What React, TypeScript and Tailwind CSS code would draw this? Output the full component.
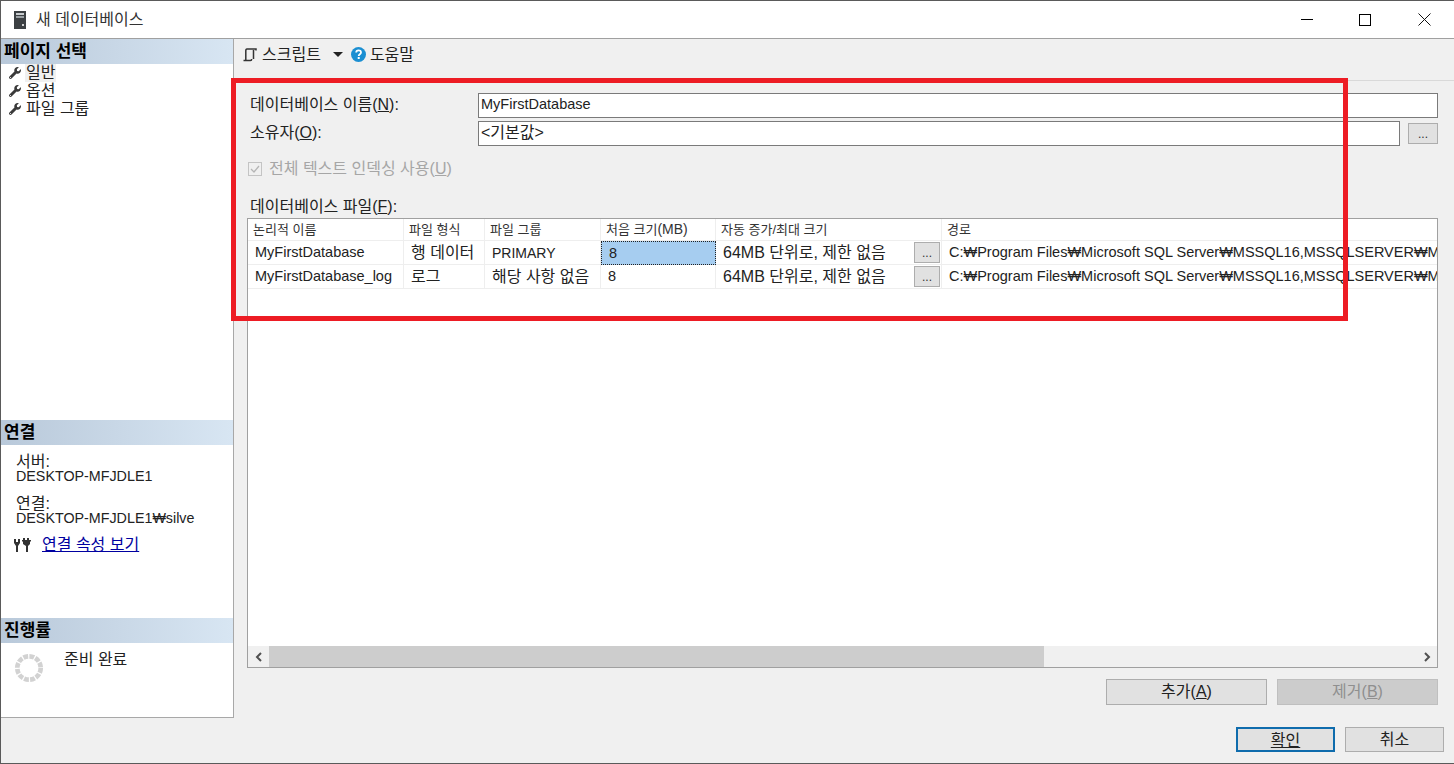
import React from 'react';
import { FaWrench } from 'react-icons/fa';

const font = "font-['Liberation_Sans','Noto_Sans_CJK_KR',sans-serif]";

const ServerIcon = () => (
  <svg width="12" height="18" viewBox="0 0 12 18">
    <rect width="12" height="18" fill="#3c4043" />
    <rect x="2" y="2" width="8" height="2" fill="#c8cccf" />
    <rect x="2" y="5" width="8" height="2" fill="#9aa0a4" />
    <rect x="8" y="13" width="2" height="2" fill="#d0d0d0" />
  </svg>
);

const ScriptIcon = () => (
  <svg width="16" height="16" viewBox="0 0 16 16" fill="none" stroke="#333" strokeWidth="1.5">
    <path d="M5 2h9v1.5M5 2c-1 0-1.2 1-1.2 2v8" />
    <path d="M1.5 13.5h7c1 0 1.2-.5 1.2-1.5M3.8 12v1.5M11.5 3v9" />
  </svg>
);

const HelpIcon = () => (
  <svg width="15" height="15" viewBox="0 0 15 15">
    <circle cx="7.5" cy="7.5" r="7.5" fill="#1b8fd2" />
    <path d="M5.2 5.6c0-3 4.8-3 4.8-.2 0 1.8-2.3 1.8-2.3 3.6" fill="none" stroke="#fff" strokeWidth="1.8" />
    <rect x="6.7" y="10" width="2" height="2" fill="#fff" />
  </svg>
);

const PlugIcon = () => (
  <svg width="18" height="14" viewBox="0 0 18 14" fill="#333">
    <path d="M0 1h2v3h2V1h2v4L4 8v6H2V8L0 5z" />
    <path d="M9 0h2v2h2V0h2v2h2v1.5h-1V6l-2 2v6h-2V8L9 6V3.5H8V2h1z" />
  </svg>
);

const Spinner = () => (
  <svg width="30" height="30" viewBox="0 0 32 32" fill="none" className="mt-[2px]">
    <circle cx="16" cy="16" r="12.5" stroke="#d2d2d2" strokeWidth="5" strokeDasharray="5.2 1.35" />
  </svg>
);

const SectionHeader = ({ children }: { children: React.ReactNode }) => (
  <div className="h-[25px] pl-[3px] pb-[1px] flex items-center bg-gradient-to-r from-[#b9c9da] to-[#d8e6f3] text-[17px] font-bold text-black leading-none">
    {children}
  </div>
);

const NavItem = ({ label, active }: { label: string; active?: boolean }) => (
  <div className="h-[18px] flex items-center pl-[8px] gap-[4px]">
    <FaWrench size={12} className="text-[#3a3a3a]" />
    <span className={active ? 'bg-[#f0f0f0] leading-[18px] px-[1px]' : 'leading-[18px] px-[1px]'}>{label}</span>
  </div>
);

const DotsButton = ({ className }: { className: string }) => (
  <button className={`bg-[#e1e1e1] border border-[#adadad] text-[12px] leading-none flex items-end justify-center pb-[3px] text-[#333] ${className}`}>
    ...
  </button>
);

const path = 'C:₩Program Files₩Microsoft SQL Server₩MSSQL16,MSSQLSERVER₩MSSQL₩DATA₩';

const cols = 'grid grid-cols-[156px_81px_116px_115px_226px_1fr]';
const cell = 'h-[24px] border-r border-b border-[#eeeeee] flex items-center overflow-hidden whitespace-nowrap';

const FileRow = ({ name, kind, group, groupClass, selected }: { name: string; kind: string; group: string; groupClass: string; selected?: boolean }) => (
  <div className={`${cols} text-[#222]`}>
    <div className={`${cell} pl-[7px] pt-[1px] text-[14.5px]`}>{name}</div>
    <div className={`${cell} pl-[7px] pt-[1px]`}>{kind}</div>
    <div className={`${cell} pl-[7px] pt-[1px] ${groupClass}`}>{group}</div>
    <div className={selected ? 'h-[24px] pl-[7px] pt-[1px] flex items-center bg-[#a6cdf0] border border-dotted border-[#222] text-[14.5px]' : `${cell} pl-[7px] pt-[1px] text-[14.5px]`}>8</div>
    <div className={`${cell} pl-[7px] justify-between pr-[1px]`}>
      <span className="whitespace-nowrap pt-[1px]">64MB 단위로, 제한 없음</span>
      <DotsButton className="w-[26px] h-[21px] shrink-0" />
    </div>
    <div className={`${cell} pl-[7px] pt-[1px] border-r-0 text-[14.5px]`}>{path}</div>
  </div>
);

const App: React.FC = () => {
  return (
    <div className={`${font} relative w-[1454px] h-[764px] overflow-hidden bg-[#f0f0f0] border-t border-l border-b border-[#5a5a5a] flex flex-col text-[16px] text-[#222]`}>
      {/* title bar */}
      <div className="h-[38px] shrink-0 bg-white border-b border-[#a0a0a0] flex items-center">
        <div className="ml-[13px] mr-[10px] flex items-center"><ServerIcon /></div>
        <span className="text-[#333]">새 데이터베이스</span>
        <div className="ml-auto flex items-center">
          <div className="w-[59px] flex justify-center"><div className="w-[12px] h-px bg-black" /></div>
          <div className="w-[58px] flex justify-center"><div className="w-[12px] h-[12px] border border-black" /></div>
          <div className="w-[60px] flex justify-center">
            <svg width="13" height="13" viewBox="0 0 13 13" stroke="#111" strokeWidth="1"><path d="M.5.5l12 12M12.5.5l-12 12" /></svg>
          </div>
        </div>
      </div>

      <div className="flex-1 flex min-h-0">
        {/* left panel */}
        <div className="w-[233px] shrink-0 flex flex-col">
          <div className="h-[679px] bg-white border-r border-b border-[#a8a8a8] flex flex-col">
            <SectionHeader>페이지 선택</SectionHeader>
            <div className="h-[356px]">
              <NavItem label="일반" active />
              <NavItem label="옵션" />
              <NavItem label="파일 그룹" />
            </div>
            <SectionHeader>연결</SectionHeader>
            <div className="h-[173px] pl-[15px] pt-[9px] leading-[15px] text-[#222]">
              <div>서버:</div>
              <div className="text-[14.3px]">DESKTOP-MFJDLE1</div>
              <div className="mt-[12px]">연결:</div>
              <div className="text-[14.3px]">DESKTOP-MFJDLE1₩silve</div>
              <div className="mt-[11px] flex items-center gap-[10px] -ml-[2px]">
                <PlugIcon />
                <span className="text-[#0000a0] underline">연결 속성 보기</span>
              </div>
            </div>
            <SectionHeader>진행률</SectionHeader>
            <div className="flex-1 flex pl-[13px] pt-[8px]">
              <Spinner />
              <span className="ml-[20px] leading-[17px]">준비 완료</span>
            </div>
          </div>
        </div>

        {/* right panel */}
        <div className="flex-1 min-w-0 flex flex-col">
          <div className="h-[42px] shrink-0 border-b border-[#d9d9d9] flex items-center pl-[8px] pb-[10px]">
            <ScriptIcon />
            <span className="ml-[4px]">스크립트</span>
            <div className="ml-[12px] w-0 h-0 border-l-[5px] border-r-[5px] border-t-[5px] border-l-transparent border-r-transparent border-t-[#222]" />
            <div className="ml-[8px] flex"><HelpIcon /></div>
            <span className="ml-[4px]">도움말</span>
          </div>

          <div className="flex-1 pl-[14px] pr-[16px] pt-[12px] flex flex-col">
            <div className="h-[25px] flex items-center">
              <label className="w-[230px] pl-[2px] pb-[2px]">데이터베이스 이름(<u>N</u>):</label>
              <div className="flex-1 h-full bg-white border border-[#7a7a7a] pl-[2px] flex items-center text-[14.5px] pb-[2px]">MyFirstDatabase</div>
            </div>
            <div className="h-[25px] mt-[3px] flex items-center">
              <label className="w-[230px] pl-[2px] pb-[2px]">소유자(<u>O</u>):</label>
              <div className="flex-1 h-full bg-white border border-[#7a7a7a] pl-[2px] flex items-center pb-[2px]">&lt;기본값&gt;</div>
              <DotsButton className="ml-[8px] w-[30px] h-[21px]" />
            </div>
            <div className="mt-[11px] flex items-center gap-[7px] text-[#a6a6a6]">
              <div className="w-[14px] h-[14px] bg-[#f0f0f0] border border-[#c4c4c4] flex items-center justify-center">
                <svg width="10" height="10" viewBox="0 0 10 10" fill="none" stroke="#b5b5b5" strokeWidth="1.3"><path d="M1 5l3 3 5-6" /></svg>
              </div>
              <span>전체 텍스트 인덱싱 사용(<u>U</u>)</span>
            </div>
            <div className="mt-[16px] pl-[2px] leading-[20px]">데이터베이스 파일(<u>F</u>):</div>

            {/* file grid */}
            <div className="-ml-[1px] mt-[1px] h-[450px] bg-white border border-[#a0a0a0] flex flex-col overflow-hidden">
              <div className="flex-1 min-h-0 overflow-hidden">
                <div className={`${cols} text-[13px] text-[#333]`}>
                  {['논리적 이름', '파일 형식', '파일 그룹', '처음 크기', '자동 증가/최대 크기', '경로'].map((h, i) => (
                    <div key={h} className={`h-[22px] pl-[5px] flex items-center border-b border-[#eeeeee] ${i < 5 ? 'border-r' : ''}`}>
                      {h}
                      {i === 3 && <span className="text-[14px]">(MB)</span>}
                    </div>
                  ))}
                </div>
                <FileRow name="MyFirstDatabase" kind="행 데이터" group="PRIMARY" groupClass="text-[14px]" selected />
                <FileRow name="MyFirstDatabase_log" kind="로그" group="해당 사항 없음" groupClass="" />
              </div>
              <div className="h-[21px] shrink-0 bg-[#f0f0f0] flex items-center">
                <div className="w-[21px] flex justify-center">
                  <svg width="8" height="10" viewBox="0 0 8 10" fill="none" stroke="#505050" strokeWidth="2"><path d="M6 1L2 5l4 4" /></svg>
                </div>
                <div className="w-[775px] h-full bg-[#cdcdcd]" />
                <div className="ml-auto w-[20px] flex justify-center">
                  <svg width="8" height="10" viewBox="0 0 8 10" fill="none" stroke="#505050" strokeWidth="2"><path d="M2 1l4 4-4 4" /></svg>
                </div>
              </div>
            </div>

            <div className="mt-[11px] flex justify-end gap-[10px]">
              <button className="w-[161px] h-[26px] bg-[#e1e1e1] border border-[#adadad]">추가(<u>A</u>)</button>
              <button className="w-[161px] h-[26px] bg-[#cccccc] border border-[#bfbfbf] text-[#8f8f8f]">제거(<u>B</u>)</button>
            </div>
            <div className="mt-[22px] -mr-[6px] flex justify-end gap-[10px]">
              <button className="w-[99px] h-[25px] bg-[#e1e1e1] border-2 border-[#0f6cad]"><u>확인</u></button>
              <button className="w-[99px] h-[25px] bg-[#e1e1e1] border border-[#adadad]">취소</button>
            </div>
          </div>
        </div>
      </div>

      {/* red annotation box drawn over the screenshot */}
      <div className="absolute left-[230px] top-[77px] w-[1117px] h-[243px] border-[5px] border-[#ed1c24] pointer-events-none" />
    </div>
  );
};

export default App;
